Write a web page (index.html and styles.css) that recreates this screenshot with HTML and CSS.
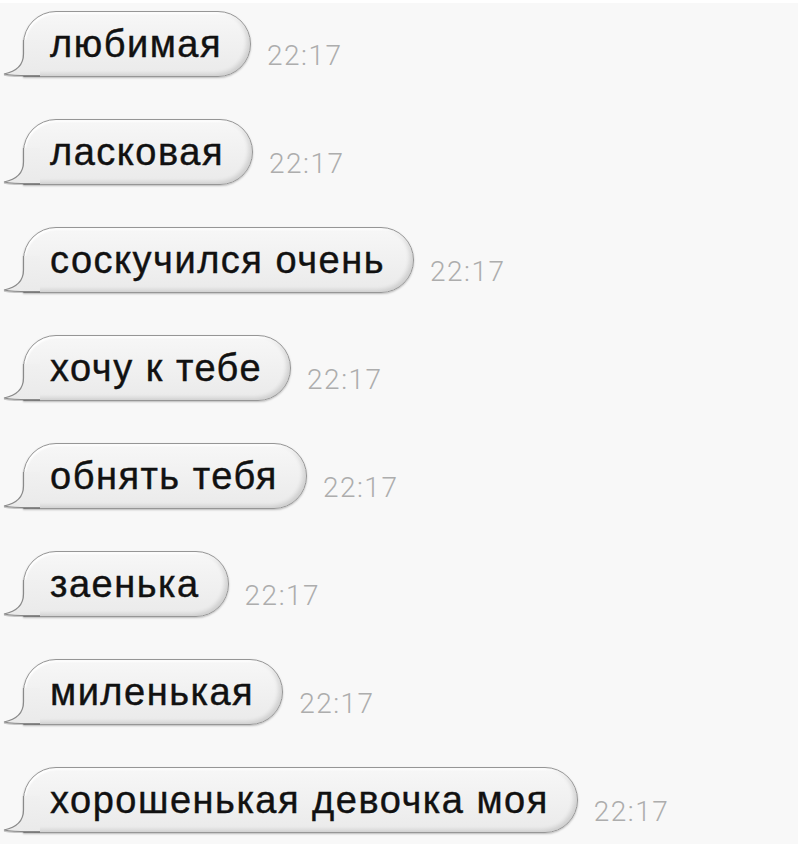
FILE: index.html
```
<!DOCTYPE html>
<html lang="ru">
<head>
    <meta charset="UTF-8">
    <meta name="viewport" content="width=device-width, initial-scale=1.0">
    <title>Сообщения</title>
    <link rel="stylesheet" href="styles.css">
</head>
<body>
    <svg class="defs" aria-hidden="true">
        <defs>
            <linearGradient id="tailFill" gradientUnits="userSpaceOnUse" x1="0" y1="0" x2="0" y2="36">
                <stop offset="0" stop-color="#f0f0f0"/>
                <stop offset="1" stop-color="#eaeaea"/>
            </linearGradient>
            <symbol id="tail" viewBox="0 0 40 37">
                <path d="M21.5 0 V14 C21.5 25 14 31.5 2 34 C12 36 22 35.5 38 35.5 L38 0 Z" fill="url(#tailFill)"/>
                <path d="M2 35 C12 37.2 22 36.7 38 36.7" fill="none" stroke="rgba(0,0,0,0.2)" stroke-width="1.4"/>
                <path d="M21.5 0 V14 C21.5 25 14 31.5 2 34 C12 36 22 35.5 38 35.5" fill="none" stroke="#8a8a8a" stroke-width="1.2"/>
            </symbol>
        </defs>
    </svg>

    <div class="chat">
        <div class="row">
            <div class="bubble"><svg class="tail"><use href="#tail"/></svg><span class="text">любимая</span></div>
            <span class="time">22:17</span>
        </div>
        <div class="row">
            <div class="bubble"><svg class="tail"><use href="#tail"/></svg><span class="text">ласковая</span></div>
            <span class="time">22:17</span>
        </div>
        <div class="row">
            <div class="bubble"><svg class="tail"><use href="#tail"/></svg><span class="text">соскучился очень</span></div>
            <span class="time">22:17</span>
        </div>
        <div class="row">
            <div class="bubble"><svg class="tail"><use href="#tail"/></svg><span class="text">хочу к тебе</span></div>
            <span class="time">22:17</span>
        </div>
        <div class="row">
            <div class="bubble"><svg class="tail"><use href="#tail"/></svg><span class="text">обнять тебя</span></div>
            <span class="time">22:17</span>
        </div>
        <div class="row">
            <div class="bubble"><svg class="tail"><use href="#tail"/></svg><span class="text">заенька</span></div>
            <span class="time">22:17</span>
        </div>
        <div class="row">
            <div class="bubble"><svg class="tail"><use href="#tail"/></svg><span class="text">миленькая</span></div>
            <span class="time">22:17</span>
        </div>
        <div class="row">
            <div class="bubble"><svg class="tail"><use href="#tail"/></svg><span class="text">хорошенькая девочка моя</span></div>
            <span class="time">22:17</span>
        </div>
    </div>
</body>
</html>
```

FILE: styles.css
```
body {
    margin: 0;
    background: #fff;
    font-family: "Liberation Sans", Arial, sans-serif;
}
.defs {
    position: absolute;
    width: 0;
    height: 0;
}
.chat {
    display: flex;
    flex-direction: column;
    gap: 42px;
    width: 798px;
    min-height: 841px;
    margin-top: 3px;
    padding: 8px 0 0 23px;
    box-sizing: border-box;
    background: #f8f8f8;
}
.row {
    display: flex;
    align-items: flex-end;
    gap: 16px;
}
.bubble {
    position: relative;
    height: 66px;
    box-sizing: border-box;
    padding: 0 28px 0 26px;
    font-size: 38px;
    line-height: 64px;
    letter-spacing: 1.5px;
    color: #111;
    -webkit-text-stroke: 0.4px #111;
    white-space: nowrap;
    border: 1px solid #969696;
    border-radius: 33px 33px 33px 0;
    background: linear-gradient(#f7f7f7, #eaeaea);
    box-shadow: inset -3px -2px 4px rgba(0, 0, 0, 0.13), inset 1px 2px 2px #fff, 0 1px 2px rgba(0, 0, 0, 0.25);
}
.tail {
    position: absolute;
    left: -22px;
    bottom: -1px;
    width: 40px;
    height: 37px;
    overflow: visible;
}
.text {
    position: relative;
}
.time {
    margin-bottom: 7px;
    font-family: Roboto, "Liberation Sans", sans-serif;
    font-weight: 300;
    font-size: 28px;
    line-height: 28px;
    letter-spacing: 1.5px;
    color: #adadad;
}
```
